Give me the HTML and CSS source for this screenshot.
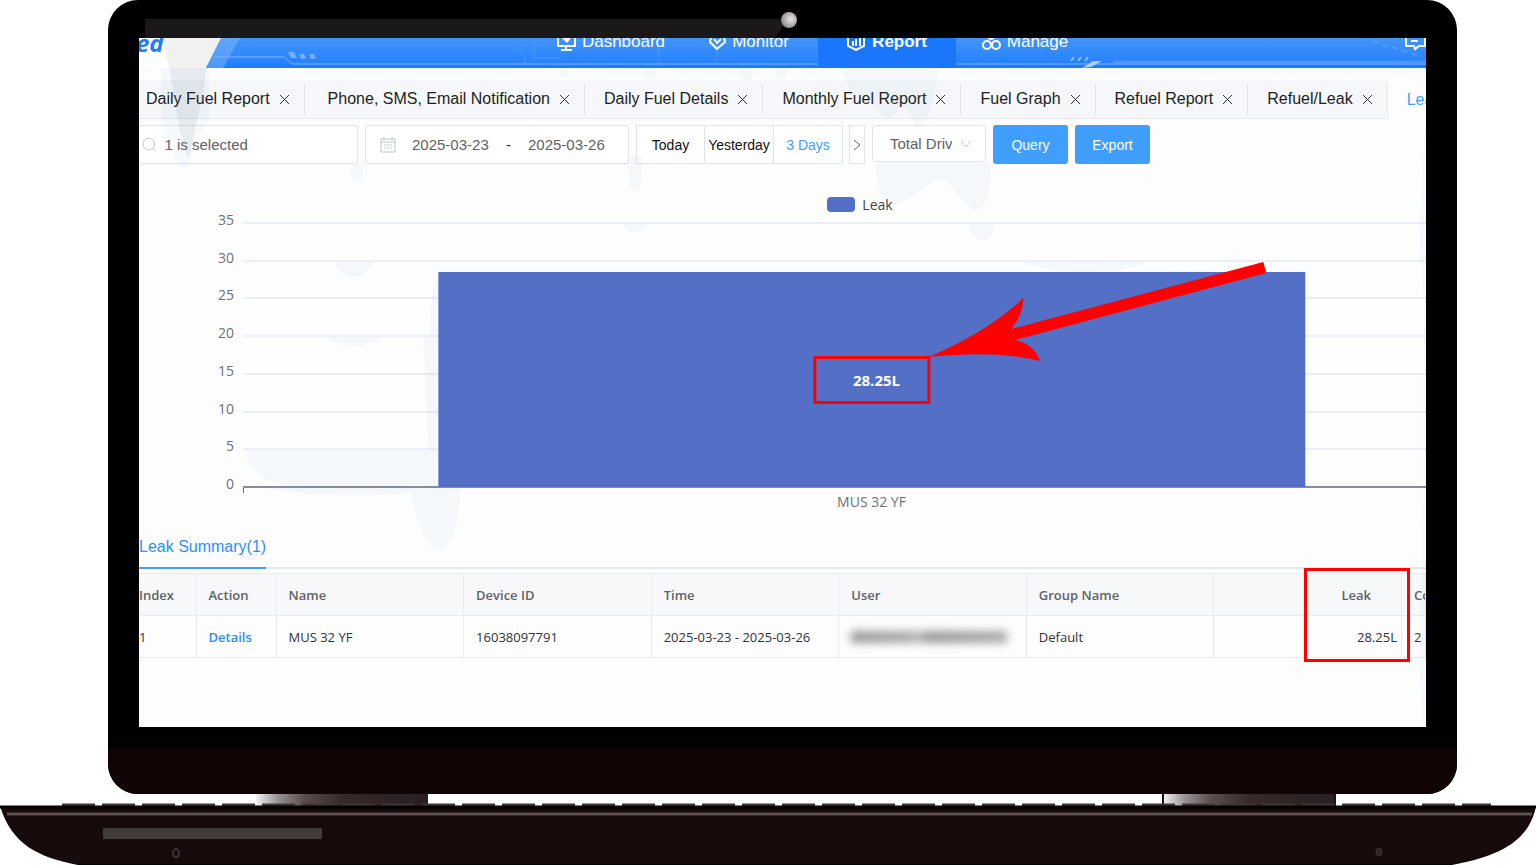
FILE: index.html
```html
<!DOCTYPE html>
<html lang="en">
<head>
    <meta charset="UTF-8">
    <meta name="viewport" content="width=device-width, initial-scale=1.0">
    <title>Leak Report</title>
    <link rel="stylesheet" href="styles.css">
</head>
<body>
    <div class="laptop">
        <div class="lid">
            <div class="bezel">
                <div class="glare"></div>
                <div class="camera"></div>
            </div>
            <div class="screen">
                <header class="topbar">
                    <svg class="topbar-art" viewBox="0 0 1287 30" preserveAspectRatio="none" aria-hidden="true">
                        <defs>
                            <linearGradient id="bar-fill" x1="0" y1="0" x2="0" y2="1">
                                <stop offset="0" stop-color="#4494f8"/>
                                <stop offset="0.8" stop-color="#2783fc"/>
                                <stop offset="1" stop-color="#1c79fb"/>
                            </linearGradient>
                        </defs>
                        <path d="M82 0H1287V30H67Z" fill="url(#bar-fill)"/>
                        <path d="M82 0H101L84 30H67Z" fill="#7db5fb" opacity="0.5"/>
                        <path d="M76 19H145L153 26H679M817 26H1287" fill="none" stroke="#7fb5fc" stroke-width="1"/>
                        <path d="M149 14h6l3 6h-6zM160 16h5l2 5h-5zM170 16h5l2 5h-5z" fill="#8fc0fd" opacity="0.7"/>
                        <path d="M932 23l3-4M939 23l3-4M946 23l3-4" stroke="#8fc0fd" stroke-width="2"/>
                        <path d="M943 30L954 23H963L952 29Z" fill="#a9cffd"/>
                        <path d="M974 24H1287" stroke="#4a96fc" stroke-width="3"/>
                        <path d="M377 8L386 18V26M395 6V20H420M520 0V24M560 8h18v16M800 4l12 8v12" fill="none" stroke="#5aa0fb" stroke-width="1" opacity="0.6"/>
                        <path d="M1234 3L1280 18" stroke="#6aa9fb" stroke-width="1" stroke-dasharray="6 4"/>
                    </svg>
                    <div class="topbar-row">
                        <span class="logo">ed</span>
                        <nav class="menu">
                            <a href="#" class="menu-item">
                                <svg width="19" height="18" viewBox="0 0 19 18" fill="none" stroke="#fff" stroke-width="2"><path d="M1 2V13H18V2M9 13V17M4 17H15"/><path d="M5 5h9l-4 5z" fill="#fff" stroke="none"/></svg>
                                Dashboard
                            </a>
                            <a href="#" class="menu-item">
                                <svg width="17" height="18" viewBox="0 0 17 18" fill="none" stroke="#fff" stroke-width="2"><path d="M8 16L1 9A7 7 0 0 1 16 9Z"/><path d="M5 6l3 4 4-4"/></svg>
                                Monitor
                            </a>
                            <a href="#" class="menu-item active">
                                <svg width="19" height="18" viewBox="0 0 19 18" fill="none" stroke="#fff" stroke-width="2"><path d="M9 1L17 4V13L9 17L1 13V4Z"/><path d="M6 8v5M9 6v7M13 5v8"/></svg>
                                Report
                            </a>
                            <a href="#" class="menu-item">
                                <svg width="19" height="18" viewBox="0 0 19 18" fill="none" stroke="#fff" stroke-width="2"><circle cx="5" cy="12" r="4"/><circle cx="14" cy="12" r="4"/><circle cx="9" cy="3" r="3"/></svg>
                                Manage
                            </a>
                        </nav>
                        <svg class="chat" width="21" height="18" viewBox="0 0 21 18" fill="none" stroke="#fff" stroke-width="2"><path d="M1 1V13H9L10 16L14 13H20V1Z"/><path d="M6 8h7"/></svg>
                    </div>
                </header>

                <div class="tabs">
                    <div class="tab">Daily Fuel Report <button class="close" aria-label="Close Daily Fuel Report"><svg viewBox="0 0 11 11"><path d="M1 1L10 10M10 1L1 10"/></svg></button></div>
                    <div class="tab">Phone, SMS, Email Notification <button class="close" aria-label="Close Notification"><svg viewBox="0 0 11 11"><path d="M1 1L10 10M10 1L1 10"/></svg></button></div>
                    <div class="tab">Daily Fuel Details <button class="close" aria-label="Close Daily Fuel Details"><svg viewBox="0 0 11 11"><path d="M1 1L10 10M10 1L1 10"/></svg></button></div>
                    <div class="tab">Monthly Fuel Report <button class="close" aria-label="Close Monthly Fuel Report"><svg viewBox="0 0 11 11"><path d="M1 1L10 10M10 1L1 10"/></svg></button></div>
                    <div class="tab">Fuel Graph <button class="close" aria-label="Close Fuel Graph"><svg viewBox="0 0 11 11"><path d="M1 1L10 10M10 1L1 10"/></svg></button></div>
                    <div class="tab">Refuel Report <button class="close" aria-label="Close Refuel Report"><svg viewBox="0 0 11 11"><path d="M1 1L10 10M10 1L1 10"/></svg></button></div>
                    <div class="tab">Refuel/Leak <button class="close" aria-label="Close Refuel/Leak"><svg viewBox="0 0 11 11"><path d="M1 1L10 10M10 1L1 10"/></svg></button></div>
                    <div class="tab current">Leak</div>
                </div>

                <form class="filters">
                    <label class="field search">
                        <svg width="15" height="15" viewBox="0 0 15 15" fill="none" stroke="#c0c4cc"><circle cx="7" cy="7" r="6"/><path d="M11 11l3 3"/></svg>
                        <input type="text" value="1 is selected" aria-label="Devices">
                    </label>
                    <div class="field dates">
                        <svg width="16" height="16" viewBox="0 0 16 16" fill="none" stroke="#c0c4cc"><path d="M1 2H15V15H1ZM1 5H15M4 0V3M12 0V3M4 8h2M7 8h2M10 8h2M4 11h2M7 11h2M10 11h2"/></svg>
                        <input type="text" value="2025-03-23" aria-label="Start date">
                        <span>-</span>
                        <input type="text" value="2025-03-26" aria-label="End date">
                    </div>
                    <div class="ranges">
                        <button type="button">Today</button>
                        <button type="button">Yesterday</button>
                        <button type="button" class="selected">3 Days</button>
                    </div>
                    <button type="button" class="next" aria-label="More ranges"><svg width="8" height="12" viewBox="0 0 8 12" fill="none" stroke="#606266"><path d="M1 1L7 6L1 11"/></svg></button>
                    <div class="picker">
                        <select aria-label="Column"><option>Total Driving</option></select>
                        <svg width="12" height="8" viewBox="0 0 12 8" fill="none" stroke="#c0c4cc"><path d="M1 1L6 7L11 1"/></svg>
                    </div>
                    <button type="button" class="btn">Query</button>
                    <button type="button" class="btn">Export</button>
                </form>

                <section class="chart">
                    <div class="legend"><i></i>Leak</div>
                    <div class="axis">
                        <span>35</span><span>30</span><span>25</span><span>20</span><span>15</span><span>10</span><span>5</span><span>0</span>
                    </div>
                    <div class="plot">
                        <hr><hr><hr><hr><hr><hr><hr><hr class="base-line">
                        <!-- 28.25 of 35 -->
                        <div class="bar" style="height: 80.7%">
                            <div class="callout">
                                28.25L
                                <svg class="arrow" width="344" height="104" viewBox="0 0 344 104" aria-hidden="true">
                                    <path d="M3 98Q62 73 98 39C98 50 94 60 86 70L338 3L341 14L90 81C103 84 111 91 115 102Q72 91 3 98Z" fill="#f00"/>
                                </svg>
                            </div>
                        </div>
                    </div>
                    <div class="category">MUS 32 YF</div>
                </section>

                <div class="summary-tabs"><a href="#" class="summary-tab">Leak Summary(1)</a></div>

                <div class="table-wrap">
                    <table>
                        <colgroup>
                            <col class="c-index"><col class="c-action"><col><col><col><col><col><col><col class="c-last">
                        </colgroup>
                        <thead>
                            <tr>
                                <th>Index</th><th>Action</th><th>Name</th><th>Device ID</th><th>Time</th><th>User</th><th>Group Name</th><th class="leak">Leak</th><th>Count</th>
                            </tr>
                        </thead>
                        <tbody>
                            <tr>
                                <td>1</td>
                                <td><a href="#">Details</a></td>
                                <td>MUS 32 YF</td>
                                <td>16038097791</td>
                                <td>2025-03-23 - 2025-03-26</td>
                                <td><span class="masked"></span></td>
                                <td>Default</td>
                                <td class="leak">28.25L</td>
                                <td>2</td>
                            </tr>
                        </tbody>
                    </table>
                    <div class="highlight"></div>
                </div>

                <!-- faint drips over the page -->
                <svg class="drips" viewBox="0 0 1287 689" preserveAspectRatio="none" aria-hidden="true">
                    <g fill="#000" opacity="0.05">
                        <path d="M24 0H81L67 30Q64 70 53 92Q40 90 36 60Z"/>
                        <path d="M26 0H81L68 30Q60 75 50 122Q40 100 36 60Z"/>
                        <path d="M34 30H66Q62 75 46 94Z"/>
                    </g>
                    <g fill="#3c8cc8" opacity="0.04">
                        <path d="M22 30H70V80Q58 100 52 122Q40 150 22 80Z"/>
                        <path d="M212 126H224Q225 144 218 145Q211 144 212 126Z"/>
                        <path d="M490 118H503Q505 152 496 153Q487 150 490 118Z"/>
                        <path d="M420 30h10q0 10-5 10t-5-10zM503 30h16q0 12-8 12t-8-12zM600 30h16q0 12-8 12t-8-12zM636 30h12q0 12-6 12t-6-12z"/>
                        <path d="M701 30H800Q792 90 776 90Q768 60 760 70Q748 95 730 60Q712 60 701 30Z"/>
                        <path d="M736 124H852Q852 172 836 172Q824 168 812 148Q800 136 788 148Q770 164 752 168Q738 160 736 124Z"/>
                        <path d="M196 224H234Q229 239 215 239Q200 238 196 224Z"/>
                        <path d="M184 299H244Q214 318 184 299Z"/>
                        <path d="M107 412H298V450Q286 444 270 448Q214 462 150 448Q108 440 107 412Z"/>
                        <path d="M298 240V450H289V400L284 299L291 298Q291 260 298 240Z"/>
                        <path d="M125 450H322Q318 512 298 513Q282 505 272 455Q190 462 125 450Z"/>
                        <path d="M484 186h24q-2 8-12 8t-12-8zM883 224h125q-20 10-60 10t-65-10zM830 186h26q-2 16-13 16t-13-16z"/>
                        <path d="M1287 85Q1276 200 1285 260L1284 520Q1278 600 1283 689H1287Z"/>
                    </g>
                </svg>
            </div>
            <div class="chin"></div>
        </div>
        <svg class="base" viewBox="0 0 1536 71" preserveAspectRatio="none" aria-hidden="true">
            <defs>
                <linearGradient id="hinge">
                    <stop offset="0" stop-color="#f2f2f6"/>
                    <stop offset="0.12" stop-color="#9c9698"/>
                    <stop offset="0.28" stop-color="#5a4d4c"/>
                    <stop offset="0.5" stop-color="#352929"/>
                    <stop offset="1" stop-color="#2a1f20"/>
                </linearGradient>
            </defs>
            <path d="M256 0H428V12H256Z" fill="url(#hinge)"/>
            <path d="M1163 0H1336V12H1163Z" fill="url(#hinge)"/>
            <path d="M1163 0V12M1335 0V12" stroke="#1a1010" stroke-width="2"/>
            <path d="M62 11H1491" stroke="#3a3838" stroke-width="3" stroke-dasharray="33 7"/>
            <path d="M0 12H1536C1530 42 1508 61 1452 71H78C38 63 12 51 0 12Z" fill="#160a0a"/>
            <path d="M0 13H1536" stroke="#050202" stroke-width="3"/>
            <path d="M7 20H1532" stroke="#5b4f50" stroke-width="3"/>
            <rect x="103" y="34" width="219" height="11" rx="1" fill="#403c3a"/>
            <path d="M78 71H1452" stroke="#000" stroke-width="2"/>
            <ellipse cx="176" cy="59" rx="3" ry="4" fill="none" stroke="#3c3434" stroke-width="2"/>
            <ellipse cx="1379" cy="58" rx="3" ry="4" fill="#2c2525" stroke="#3c3434"/>
        </svg>
    </div>
</body>
</html>
```
FILE: styles.css
```css
* {
    box-sizing: border-box;
}

body {
    margin: 0;
    background: #fff;
    font-family: "Liberation Sans", Arial, sans-serif;
    font-size: 15px;
    color: #303133;
    overflow: hidden;
}

a {
    text-decoration: none;
}

button, input, select {
    font-family: inherit;
    margin: 0;
}

/* Laptop */
.laptop {
    display: flex;
    flex-direction: column;
}

.lid {
    margin: 0 79px 0 108px;
    background: #000;
    border-radius: 30px;
    overflow: hidden;
}

.bezel {
    display: flex;
    height: 38px;
    padding-left: 37px;
}

.glare {
    width: 49%;
    height: 19px;
    margin-top: 19px;
    background: #1a1819;
    clip-path: polygon(0 0, 100% 0, 98% 100%, 0 100%);
}

.camera {
    position: relative;
    width: 16px;
    height: 16px;
    margin: 12px 0 0 -7px;
    border-radius: 50%;
    background: radial-gradient(circle at 60% 45%, #e6e6e6, #a39c9c 60%, #4a4242);
}

.screen {
    position: relative;
    margin: 0 31px;
    padding-bottom: 69px;
    background: #fdfdfe;
    overflow: hidden;
}

.chin {
    height: 67px;
    background: linear-gradient(#000 22px, #110605 22px);
}

.base {
    display: block;
    width: 100%;
    height: 71px;
}

.drips {
    position: absolute;
    inset: 0;
    width: 100%;
    height: 100%;
    pointer-events: none;
}

/* Top bar, scrolled partly out of view */
.topbar {
    position: relative;
    display: flex;
    align-items: flex-end;
    height: 30px;
    overflow: hidden;
    background: #fff;
}

.topbar-art {
    position: absolute;
    inset: 0;
    width: 100%;
    height: 100%;
}

.topbar-row {
    position: relative;
    display: grid;
    grid-template-columns: 1fr auto 1fr;
    align-items: center;
    width: 100%;
    height: 52px;
}

.logo {
    margin-left: -3px;
    color: #1f7dfb;
    font-family: "Open Sans", sans-serif;
    font-size: 24px;
    font-weight: bold;
    font-style: italic;
}

.menu {
    display: flex;
    height: 52px;
    padding-left: 71px;
}

.menu-item {
    display: flex;
    align-items: center;
    justify-content: center;
    gap: 6px;
    width: 138px;
    color: #fff;
    font-size: 17px;
}

.menu-item.active {
    background: #1a77fb;
    font-weight: bold;
}

.chat {
    justify-self: end;
}

/* Report tabs */
.tabs {
    display: flex;
    height: 39px;
    margin-top: 12px;
    white-space: nowrap;
}

.tab {
    display: flex;
    flex: none;
    align-items: center;
    gap: 9px;
    padding: 0 15px 0 19px;
    border-bottom: 1px solid #e4e7ed;
    background: linear-gradient(#e0e4eb, #e0e4eb) right center / 1px 30px no-repeat #f5f7fa;
    color: #1d1e20;
    font-size: 16px;
}

.tab:first-child {
    padding-left: 7px;
}

.tab:nth-child(2) {
    padding-left: 23px;
}

.tab.current {
    border: none;
    background: none;
    color: #409eff;
}

.close {
    display: flex;
    width: 11px;
    padding: 0;
    border: none;
    background: none;
}

.close svg {
    width: 11px;
    height: 11px;
    stroke: #303133;
}

/* Filters */
.filters {
    display: flex;
    gap: 7px;
    height: 39px;
    margin-top: 6px;
}

.field {
    display: flex;
    align-items: center;
    border: 1px solid #dfe3ea;
    border-radius: 2px;
    background: #fff;
}

.field input {
    min-width: 0;
    padding: 0;
    border: none;
    background: none;
    color: #606266;
    font-size: 15px;
}

.search {
    gap: 8px;
    width: 219px;
    padding-left: 3px;
    border-left: none;
}

.dates {
    width: 264px;
    padding: 0 14px;
}

.dates input {
    width: 80px;
    margin-left: 16px;
}

.dates span {
    margin-left: 14px;
}

.dates span + input {
    margin-left: 17px;
}

.ranges {
    display: flex;
}

.ranges button {
    width: 69px;
    padding: 0;
    border: 1px solid #dfe3ea;
    background: #fff;
    color: #111;
    font-size: 14px;
}

.ranges button + button {
    border-left: none;
}

.ranges .selected {
    color: #409eff;
}

.next {
    display: flex;
    align-items: center;
    justify-content: center;
    width: 16px;
    margin-left: -1px;
    padding: 0;
    border: 1px solid #dfe3ea;
    background: #fff;
}

.picker {
    position: relative;
    width: 114px;
    height: 37px;
}

.picker select {
    width: 100%;
    height: 100%;
    padding: 0 33px 0 17px;
    border: 1px solid #dfe3ea;
    border-radius: 4px;
    background: #fff;
    appearance: none;
    color: #606266;
    font-size: 15px;
}

.picker svg {
    position: absolute;
    top: 15px;
    right: 14px;
}

.btn {
    width: 75px;
    border: none;
    border-radius: 3px;
    background: #409eff;
    color: #fff;
    font-size: 14px;
}

/* Chart runs past the right edge of the screen */
.chart {
    display: grid;
    grid-template-columns: 95px 1fr;
    column-gap: 9px;
    width: calc(100% + 74px);
    padding-top: 30px;
    color: #6e7079;
    font-family: "Open Sans", "Noto Sans", sans-serif;
    font-size: 14px;
}

.legend {
    grid-column: 1 / -1;
    display: flex;
    align-items: center;
    justify-content: center;
    gap: 7px;
    height: 20px;
    padding-left: 81px;
    color: #444;
}

.legend i {
    width: 28px;
    height: 15px;
    border-radius: 4px;
    background: #5470c6;
}

.axis {
    display: flex;
    flex-direction: column;
    justify-content: space-between;
    height: 280px;
    margin-top: -2px;
    line-height: 16px;
    text-align: right;
}

.plot {
    position: relative;
    display: flex;
    flex-direction: column;
    justify-content: space-between;
    height: 266px;
    margin-top: 8px;
}

.plot hr {
    width: 100%;
    height: 2px;
    margin: 0;
    border: none;
    background: #eceff5;
}

.plot .base-line {
    background: #8a8d97;
}

.plot::after {
    content: "";
    position: absolute;
    top: 100%;
    left: 0;
    width: 1px;
    height: 5px;
    background: #6e7079;
}

.bar {
    position: absolute;
    bottom: 1px;
    left: 50%;
    display: flex;
    align-items: center;
    justify-content: center;
    width: 69%;
    transform: translateX(-50%);
    background: #5470c6;
}

.callout {
    position: relative;
    width: 117px;
    height: 48px;
    padding-left: 10px;
    border: 3px solid #f00;
    color: #fff;
    font-size: 15px;
    font-weight: bold;
    line-height: 42px;
    text-align: center;
}

.arrow {
    position: absolute;
    top: -100px;
    left: 109px;
}

.category {
    grid-column: 2;
    line-height: 20px;
    text-align: center;
}

/* Summary table */
.summary-tabs {
    display: flex;
    height: 40px;
    margin-top: 17px;
    border-bottom: 2px solid #e4e7ed;
}

.summary-tab {
    height: 40px;
    border-bottom: 2px solid #409eff;
    color: #2f8fff;
    font-size: 16px;
    line-height: 36px;
}

.table-wrap {
    position: relative;
    margin-top: 4px;
}

table {
    width: 100%;
    table-layout: fixed;
    border-collapse: collapse;
    border-top: 1px solid #e8ebf0;
    font-family: "Open Sans", "Noto Sans", sans-serif;
    font-size: 13px;
}

.c-index {
    width: 57px;
}

.c-action {
    width: 80px;
}

.c-last {
    width: 24px;
}

th, td {
    height: 42px;
    padding: 0 0 0 12px;
    border-right: 1px solid #e8ebf0;
    border-bottom: 1px solid #e8ebf0;
    overflow: hidden;
    text-align: left;
    white-space: nowrap;
}

th {
    background: #f6f8f9;
    color: #606266;
    font-weight: 600;
}

th:first-child, td:first-child {
    padding-left: 0;
}

td a {
    color: #2f8bff;
    font-weight: 600;
}

th.leak {
    padding-right: 30px;
    text-align: right;
}

td.leak {
    padding-right: 4px;
    text-align: right;
}

.masked {
    display: block;
    width: 156px;
    height: 12px;
    background: linear-gradient(90deg, #999, #aaa 38%, #bbb 42%, #999 50%, #aaa);
    filter: blur(4px);
}

.highlight {
    position: absolute;
    top: -5px;
    right: 16px;
    bottom: -4px;
    width: 106px;
    border: 3px solid #f00;
}
```
